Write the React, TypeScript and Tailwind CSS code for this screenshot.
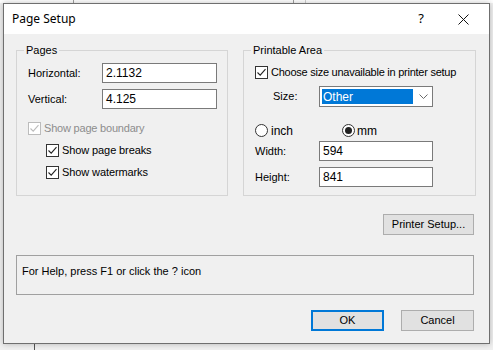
import React from "react";

const font = { fontFamily: '"Liberation Sans", Arial, sans-serif' };

const Check = ({ disabled = false }: { disabled?: boolean }) => (
  <span
    className={`flex h-[13px] w-[13px] shrink-0 items-center justify-center border bg-white ${
      disabled ? "border-[#bcbcbc]" : "border-[#333333]"
    }`}
  >
    <svg width="11" height="11" viewBox="0 0 11 11">
      <path
        d="M1.5 5.5 L4.2 8.2 L9.5 2.2"
        fill="none"
        stroke={disabled ? "#bcbcbc" : "#222222"}
        strokeWidth="1.1"
      />
    </svg>
  </span>
);

const Radio = ({ on = false }: { on?: boolean }) => (
  <span className="flex h-[13px] w-[13px] shrink-0 items-center justify-center rounded-full border border-[#333333] bg-white">
    {on && <span className="h-[7px] w-[7px] rounded-full bg-[#222222]" />}
  </span>
);

const Field = ({ value, w }: { value: string; w: string }) => (
  <div
    className={`flex h-[20px] ${w} items-center border border-[#7a7a7a] bg-white px-[3px] text-[12px] text-black`}
  >
    {value}
  </div>
);

const Button = ({
  label,
  w,
  primary = false,
}: {
  label: string;
  w: string;
  primary?: boolean;
}) => (
  <div
    className={`flex h-[21px] ${w} items-center justify-center bg-[#e1e1e1] text-[11px] text-black ${
      primary ? "border-2 border-[#0078d7]" : "border border-[#adadad]"
    }`}
  >
    {label}
  </div>
);

export default function App() {
  return (
    <div
      className="relative h-[350px] w-[493px] overflow-hidden bg-[#f0f0f0] pl-[3px] pt-[3px]"
      style={font}
    >
      {/* window behind the dialog */}
      <div className="absolute left-0 top-0 h-[3px] w-[493px] bg-white">
        <div className="absolute left-[73px] top-0 h-[3px] w-px bg-[#a0a0a0]" />
        <div className="absolute left-[293px] top-0 h-[3px] w-px bg-[#a0a0a0]" />
        <div className="absolute left-[305px] top-0 h-[3px] w-px bg-[#d0d0d0]" />
      </div>
      <div className="absolute left-[34px] top-[344px] h-[6px] w-px bg-[#555555]" />

      <div className="relative flex h-[341px] w-[487px] flex-col border border-[#6f6f6f] bg-[#f0f0f0] shadow-[0_0_6px_rgba(0,0,0,0.25)]">
        {/* title bar */}
        <div className="flex h-[30px] items-center bg-white pl-[8px] text-black">
          <span
            className="text-[12px]"
            style={{ fontFamily: '"Noto Sans", "Open Sans", sans-serif' }}
          >
            Page Setup
          </span>
          <span
            className="ml-auto mr-[34px] text-[13px]"
            style={{ fontFamily: '"Noto Sans", sans-serif' }}
          >
            ?
          </span>
          <svg width="11" height="11" viewBox="0 0 11 11" className="mr-[20px]">
            <path d="M0.5 0.5 L10.5 10.5 M10.5 0.5 L0.5 10.5" stroke="#111" strokeWidth="1" />
          </svg>
        </div>

        {/* body */}
        <div className="flex flex-col px-[12px] pt-[10px] text-[11px] text-black">
          <div className="flex gap-[15px]">
            <fieldset className="flex h-[152px] w-[212px] flex-col border border-[#d5d5d5] pl-[11px]">
              <legend className="-ml-[4px] px-[2px] leading-[13px]">Pages</legend>
              <div className="mt-[6px] flex items-center">
                <span className="w-[74px]">Horizontal:</span>
                <Field value="2.1132" w="w-[115px]" />
              </div>
              <div className="mt-[6px] flex items-center">
                <span className="w-[74px]">Vertical:</span>
                <Field value="4.125" w="w-[115px]" />
              </div>
              <div className="mt-[13px] flex h-[13px] items-center gap-[3px] tracking-[-0.2px] text-[#8d8d8d]">
                <Check disabled />
                <span>Show page boundary</span>
              </div>
              <div className="ml-[18px] mt-[9px] flex h-[13px] items-center gap-[3px] tracking-[-0.1px]">
                <Check />
                <span>Show page breaks</span>
              </div>
              <div className="ml-[18px] mt-[9px] flex h-[13px] items-center gap-[3px] tracking-[-0.1px]">
                <Check />
                <span>Show watermarks</span>
              </div>
            </fieldset>

            <fieldset className="flex h-[152px] w-[233px] flex-col border border-[#d5d5d5] pl-[11px]">
              <legend className="-ml-[4px] px-[2px] leading-[13px]">Printable Area</legend>
              <div className="mt-[9px] flex h-[13px] items-center gap-[3px]">
                <Check />
                <span className="whitespace-nowrap tracking-[-0.25px]">
                  Choose size unavailable in printer setup
                </span>
              </div>
              <div className="mt-[7px] flex items-center">
                <span className="ml-[18px] w-[46px]">Size:</span>
                <div className="flex h-[21px] w-[114px] items-center border border-[#7a7a7a] bg-white p-[2px]">
                  <div className="flex h-full w-[91px] items-center bg-[#0078d7] px-[1px] text-[12px] text-white">
                    Other
                  </div>
                  <svg width="9" height="6" viewBox="0 0 9 6" className="ml-[6px]">
                    <path d="M0.5 0.5 L4.5 4.5 L8.5 0.5" fill="none" stroke="#6b6b6b" strokeWidth="1" />
                  </svg>
                </div>
              </div>
              <div className="mt-[17px] flex h-[13px] items-center">
                <div className="flex w-[87px] items-center gap-[3px]">
                  <Radio />
                  <span className="text-[12px]">inch</span>
                </div>
                <div className="flex items-center gap-[2px]">
                  <Radio on />
                  <span className="text-[12px]">mm</span>
                </div>
              </div>
              <div className="mt-[4px] flex items-center">
                <span className="w-[64px]">Width:</span>
                <Field value="594" w="w-[114px]" />
              </div>
              <div className="mt-[6px] flex items-center">
                <span className="w-[64px]">Height:</span>
                <Field value="841" w="w-[114px]" />
              </div>
            </fieldset>
          </div>

          <div className="mr-[3px] mt-[18px] flex justify-end">
            <Button label="Printer Setup..." w="w-[91px]" />
          </div>

          <div className="mr-[3px] mt-[20px] h-[40px] border border-[#a0a0a0] px-[5px] pt-[7px]">
            For Help, press F1 or click the ? icon
          </div>

          <div className="mr-[3px] mt-[15px] flex justify-end gap-[17px]">
            <Button label="OK" w="w-[73px]" primary />
            <Button label="Cancel" w="w-[73px]" />
          </div>
        </div>
      </div>
    </div>
  );
}
